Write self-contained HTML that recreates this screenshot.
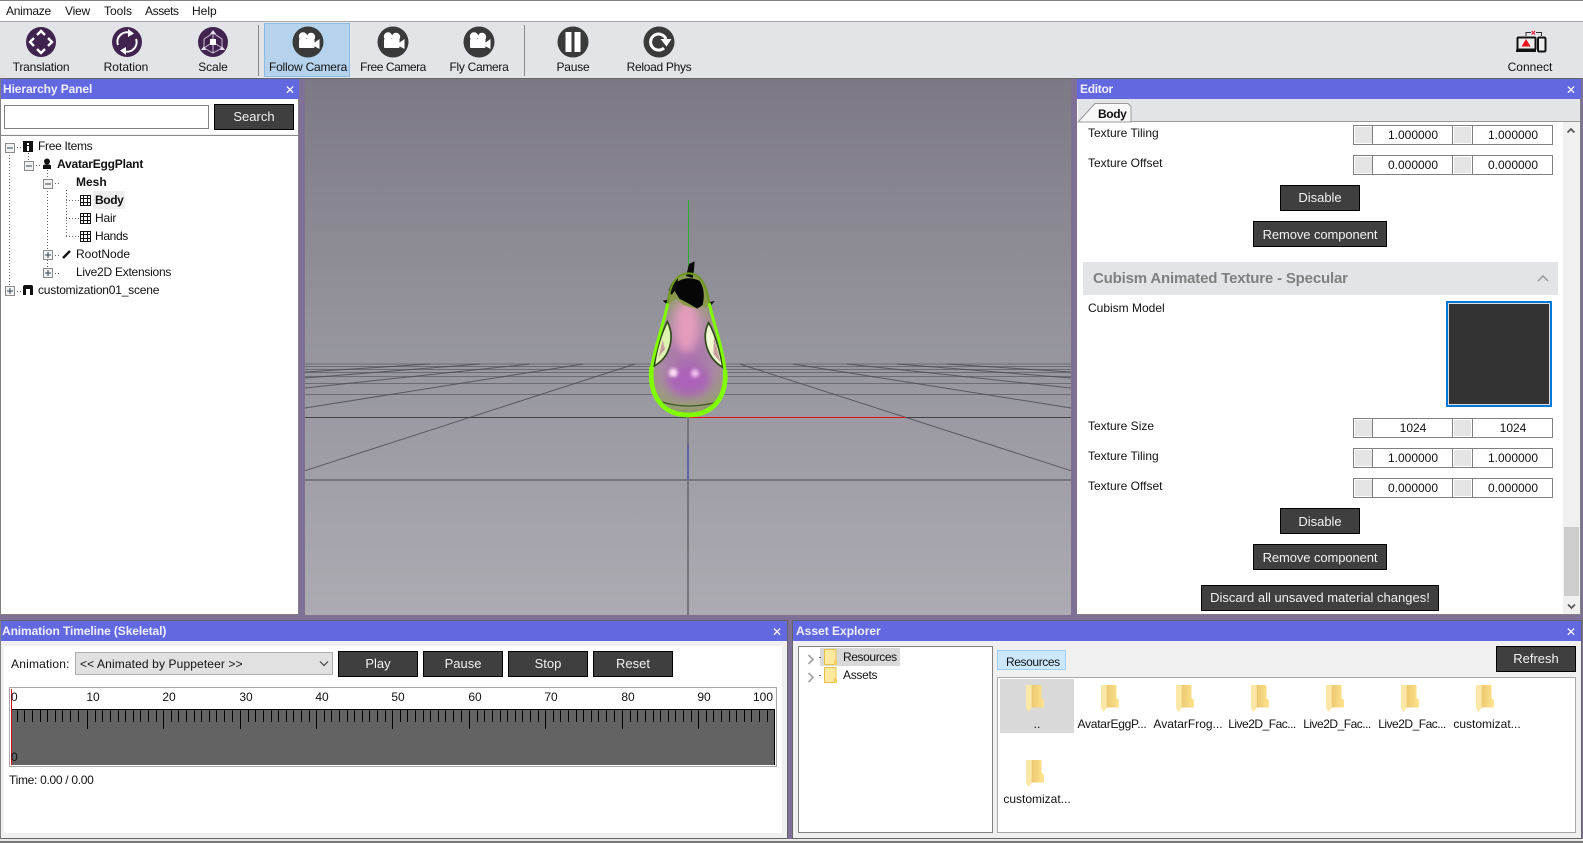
<!DOCTYPE html>
<html><head><meta charset="utf-8"><title>Animaze Editor</title>
<style>
*{box-sizing:border-box}
html,body{margin:0;padding:0}
body{width:1583px;height:843px;overflow:hidden;position:relative;background:#7e7096;font:12px/16px "Liberation Sans",sans-serif;color:#111}
.a{position:absolute}
.t{position:absolute;white-space:nowrap;height:16px;line-height:16px}
.c{position:absolute;white-space:nowrap;height:16px;line-height:16px;width:120px;text-align:center}
.b{position:absolute;background:#3f3f3f;border:1px solid #000;color:#f2f2f2;font-size:13px;text-align:center;white-space:nowrap}
.title{position:absolute;background:#6269e0;height:20px;color:#eef;font-weight:bold;line-height:20px;white-space:nowrap;padding-left:2px}
.x{position:absolute;color:#fff;top:1px;font:12px/20px "DejaVu Sans",sans-serif;font-weight:normal;letter-spacing:0}
.fr{position:absolute;left:1353px;width:200px;height:20px;background:#fff;border:1px solid #808080;text-align:center;line-height:19px}
.fr i{position:absolute;top:0;width:19px;height:18px;background:#e5e5e5;border:1px solid #fff;border-right:1px solid #fff}
.fr i.l{left:0}.fr i.r{left:99px}
.fr s{position:absolute;top:0;width:1px;height:18px;background:#808080}
.fr span{position:absolute;top:0;width:80px;height:18px}
.fr span.l{left:19px}.fr span.r{left:119px}
svg{position:absolute;overflow:visible}
</style></head><body>

<!-- menu -->
<div class="a" style="left:0;top:0;width:1583px;height:22px;background:#fff;border-top:1px solid #808080;border-bottom:1px solid #a8a8a8"></div>
<div class="t" style="left:6px;top:3px;letter-spacing:-.25px">Animaze</div>
<div class="t" style="left:65px;top:3px;letter-spacing:-.2px">View</div>
<div class="t" style="left:104px;top:3px">Tools</div>
<div class="t" style="left:145px;top:3px;letter-spacing:-.4px">Assets</div>
<div class="t" style="left:192px;top:3px">Help</div>

<!-- toolbar -->
<div class="a" style="left:0;top:22px;width:1583px;height:57px;background:#e3e4e8;border-bottom:1px solid #666"></div>
<div class="a" style="left:264px;top:23px;width:86px;height:54px;background:#b5d3ec;border:1px solid #8cbce6"></div>
<div class="a" style="left:258px;top:25px;width:1px;height:51px;background:#8a8a8a"></div>
<div class="a" style="left:524px;top:25px;width:1px;height:51px;background:#8a8a8a"></div>

<svg style="left:0;top:0" width="1583" height="80" viewBox="0 0 1583 80">
 <!-- translation -->
 <g transform="translate(41,42)"><circle r="15" fill="#40234f"/>
  <path d="M-4,-7 L0,-11 L4,-7 M-4,7 L0,11 L4,7 M-7,-4 L-11,0 L-7,4 M7,-4 L11,0 L7,4" fill="none" stroke="#fff" stroke-width="2.4"/></g>
 <!-- rotation -->
 <g transform="translate(127,42)"><circle r="15" fill="#40234f"/>
  <path d="M-9,3 A9.5,9.5 0 0 1 3,-9.2 M9,-3 A9.5,9.5 0 0 1 -3,9.2" fill="none" stroke="#fff" stroke-width="2"/>
  <path d="M1,-13 L7,-8.5 L1,-5Z M-1,13 L-7,8.500 L-1,5Z" fill="#fff"/></g>
 <!-- scale -->
 <g transform="translate(213,42)"><circle r="15" fill="#40234f"/>
  <path d="M0,-9 L-9,-3 L-9,6 L0,11 L9,6 L9,-3Z M0,-9 V-3 M-9,6 L-3,2 M9,6 L3,2 M0,3V11" fill="none" stroke="#cdbfd6" stroke-width="1"/>
  <rect x="-3" y="-3" width="6" height="6" fill="#fff"/><path d="M0,-12 L-3,-8 H3Z M-12,8 L-7,8 L-9,4Z M12,8 L7,8 L9,4Z" fill="#e8e0ee"/></g>
 <!-- cameras -->
 <g transform="translate(308,42)"><circle r="15.5" fill="#3a3a3a"/>
  <circle cx="-5" cy="-5.500" r="4.200" fill="#fff"/><circle cx="3" cy="-5" r="4.200" fill="#fff"/>
  <rect x="-9" y="-3" width="15.500" height="9" rx="1" fill="#fff"/><path d="M6,1 L11.500,-3 V7 L6,4Z" fill="#fff"/></g>
 <g transform="translate(393,42)"><circle r="15.5" fill="#3a3a3a"/>
  <circle cx="-5" cy="-5.500" r="4.200" fill="#fff"/><circle cx="3" cy="-5" r="4.200" fill="#fff"/>
  <rect x="-9" y="-3" width="15.500" height="9" rx="1" fill="#fff"/><path d="M6,1 L11.500,-3 V7 L6,4Z" fill="#fff"/></g>
 <g transform="translate(479,42)"><circle r="15.5" fill="#3a3a3a"/>
  <circle cx="-5" cy="-5.500" r="4.200" fill="#fff"/><circle cx="3" cy="-5" r="4.200" fill="#fff"/>
  <rect x="-9" y="-3" width="15.500" height="9" rx="1" fill="#fff"/><path d="M6,1 L11.500,-3 V7 L6,4Z" fill="#fff"/></g>
 <!-- pause -->
 <g transform="translate(573,42)"><circle r="15.5" fill="#3a3a3a"/><rect x="-7.5" y="-10" width="6" height="20" fill="#fff"/><rect x="1.5" y="-10" width="6" height="20" fill="#fff"/></g>
 <!-- reload -->
 <g transform="translate(659,42)"><circle r="15.5" fill="#3a3a3a"/>
  <path d="M5,6 A8,8 0 1 1 7,-3" fill="none" stroke="#fff" stroke-width="3"/><path d="M1.500,-3 H12.500 L7.500,4.500Z" fill="#fff"/></g>
 <!-- connect -->
 <g>
  <rect x="1517.5" y="37.5" width="18" height="12" rx="1" fill="#eee" stroke="#111" stroke-width="2"/>
  <path d="M1516,49.500 H1536 V52 H1516Z" fill="#111"/>
  <path d="M1526,39 L1530.700,46.500 H1521.500Z" fill="#e8141c"/>
  <rect x="1538" y="37.5" width="7.5" height="14" rx="1.2" fill="#eee" stroke="#111" stroke-width="2"/>
  <path d="M1526,36 V32.500 H1531 M1536,32.500 H1541.500 V36" fill="none" stroke="#333" stroke-width="1"/>
  <path d="M1531.700,31 L1535,34.500 M1535,31 L1531.700,34.500" stroke="#e8344c" stroke-width="1.300"/>
 </g>
</svg>
<div class="c" style="left:-19px;top:59px;letter-spacing:-.2px">Translation</div>
<div class="c" style="left:66px;top:59px">Rotation</div>
<div class="c" style="left:153px;top:59px;letter-spacing:-.1px">Scale</div>
<div class="c" style="left:248px;top:59px;letter-spacing:-.2px">Follow Camera</div>
<div class="c" style="left:333px;top:59px;letter-spacing:-.45px">Free Camera</div>
<div class="c" style="left:419px;top:59px;letter-spacing:-.3px">Fly Camera</div>
<div class="c" style="left:513px;top:59px;letter-spacing:-.2px">Pause</div>
<div class="c" style="left:599px;top:59px;letter-spacing:-.3px">Reload Phys</div>
<div class="c" style="left:1470px;top:59px">Connect</div>

<!-- hierarchy panel -->
<div class="a" style="left:0;top:79px;width:299px;height:536px;background:#fff;border-left:1px solid #808080;border-right:1px solid #808080;border-bottom:1px solid #808080"></div>
<div class="title" style="left:1px;top:79px;width:298px;letter-spacing:-.1px">Hierarchy Panel<span class="x" style="left:284px">✕</span></div>
<div class="a" style="left:4px;top:105px;width:205px;height:24px;background:#fff;border:1px solid #808080"></div>
<div class="b" style="left:214px;top:104px;width:80px;height:26px;line-height:24px">Search</div>
<div class="a" style="left:1px;top:134px;width:297px;height:2px;background:#f0f0f0;border-bottom:1px solid #8a8a8a"></div>
<div class="a" style="left:93px;top:191px;width:32px;height:18px;background:#eee"></div>

<svg style="left:0;top:130px" width="300" height="175" viewBox="0 130 300 175">
 <g fill="none" stroke="#666" stroke-dasharray="1 2">
  <path d="M9.500,152V286M28.500,153V160M47.500,170V178M47.500,188V268M66.500,190V237M14,147.500H23M33,165.500H42M52,183.500H60M66,200.500H80M66,218.500H80M66,236.500H80M52,255.500H61M52,273.500H60M14,291.500H23"/>
 </g>
 <g fill="#f2f2f2" stroke="#8a8a8a">
  <rect x="5.500" y="143.500" width="9" height="9"/><rect x="24.500" y="161.500" width="9" height="9"/><rect x="43.500" y="179.500" width="9" height="9"/><rect x="43.500" y="250.500" width="9" height="9"/><rect x="43.500" y="268.500" width="9" height="9"/><rect x="5.500" y="286.500" width="9" height="9"/>
 </g>
 <path d="M7,148H13M26,166H32M45,184H51M45,255H51M48,252V258M45,273H51M48,270V276M7,291H13M10,288V294" stroke="#345" stroke-width="1" fill="none"/>
 <rect x="23" y="141" width="10" height="11" fill="#111"/><rect x="27" y="143" width="2" height="2" fill="#fff"/><rect x="27" y="146" width="2" height="5" fill="#fff"/>
 <circle cx="47" cy="161.500" r="3" fill="#111"/><path d="M43,169V166Q43,164.500 45,164.500H49Q51,164.500 51,166V169Z" fill="#111"/>
 <g fill="none" stroke="#111"><path d="M80.500,195.500h10v10h-10zM83.500,195.500v10M87.500,195.500v10M80.500,198.500h10M80.500,202.500h10"/><path d="M80.500,213.500h10v10h-10zM83.500,213.500v10M87.500,213.500v10M80.500,216.500h10M80.500,220.500h10"/><path d="M80.500,231.500h10v10h-10zM83.500,231.500v10M87.500,231.500v10M80.500,234.500h10M80.500,238.500h10"/></g>
 <path d="M63,258L70,251" stroke="#111" stroke-width="2.400"/>
 <path d="M23,295V287Q23,285 25,285H31Q33,285 33,287V295H30V289H26V295Z" fill="#111"/>
</svg>
<div class="t" style="left:38px;top:138px;letter-spacing:-.3px">Free Items</div>
<div class="t" style="left:57px;top:156px;font-weight:bold;letter-spacing:-.2px">AvatarEggPlant</div>
<div class="t" style="left:76px;top:174px;font-weight:bold">Mesh</div>
<div class="t" style="left:95px;top:192px;font-weight:bold;letter-spacing:-.4px">Body</div>
<div class="t" style="left:95px;top:210px;letter-spacing:-.2px">Hair</div>
<div class="t" style="left:95px;top:228px;letter-spacing:-.35px">Hands</div>
<div class="t" style="left:76px;top:246px">RootNode</div>
<div class="t" style="left:76px;top:264px;letter-spacing:-.25px">Live2D Extensions</div>
<div class="t" style="left:38px;top:282px;letter-spacing:-.2px">customization01_scene</div>

<!-- viewport -->
<div class="a" style="left:305px;top:79px;width:766px;height:536px;background:linear-gradient(180deg,#7c7985 0%,#96959d 49%,#9c9ba3 65%,#acabb2 100%)"></div>
<svg style="left:305px;top:79px" width="766" height="536" viewBox="305 79 766 536">
 <g stroke="#5e5e64" fill="none">
  <path d="M305,364H1071M305,366.500H1071M305,369.500H1071M305,372.500H1071M305,376.500H1071M305,383.500H1071M305,394.500H1071" stroke-opacity=".75"/>
  <path d="M305,470.700L635,364M1071,470.700L740,364M305,408L583,364M1071,408L793,364M305,388L530,364M1071,388L847,364M305,378L480,364M1071,378L897,364M305,372L430,364M1071,372L947,364" stroke="#4d4d52" stroke-opacity=".85"/>
  <path d="M305,417.500H1071" stroke="#444"/>
  <path d="M688,417.500H906" stroke="#e01010"/>
  <path d="M305,480H1071" stroke="#76767a" stroke-width="2"/>
  <path d="M688,417V615" stroke="#76767a" stroke-width="2"/>
  <path d="M688,444V480" stroke="#5050c8"/>
  <path d="M688.500,200V275" stroke="#28b030"/>
 </g>
 <defs>
  <radialGradient id="eg" gradientUnits="userSpaceOnUse" cx="205" cy="340" r="205"><stop offset="0" stop-color="#a86cae"/><stop offset=".45" stop-color="#a98aa4"/><stop offset=".75" stop-color="#9a9a7c"/><stop offset="1" stop-color="#8a9c58"/></radialGradient>
  <filter id="bl" x="-50%" y="-50%" width="200%" height="200%"><feGaussianBlur stdDeviation="14"/></filter>
  <filter id="bs" x="-50%" y="-50%" width="200%" height="200%"><feGaussianBlur stdDeviation="5"/></filter>
  <clipPath id="ec"><path d="M205,100C170,100 150,130 143,190C135,240 110,300 95,380C85,470 130,525 205,525C280,525 322,470 315,390C305,310 280,250 268,190C258,130 240,100 205,100Z"/></clipPath>
 </defs>
 <g transform="translate(620,240) scale(.33333)">
  <path d="M205,100C170,100 150,130 143,190C135,240 110,300 95,380C85,470 130,525 205,525C280,525 322,470 315,390C305,310 280,250 268,190C258,130 240,100 205,100Z" fill="url(#eg)"/>
  <g clip-path="url(#ec)">
   <ellipse cx="200" cy="260" rx="38" ry="80" fill="#e49cbc" filter="url(#bl)"/>
   <ellipse cx="205" cy="420" rx="65" ry="48" fill="#ac62b8" filter="url(#bl)"/>
   <circle cx="160" cy="398" r="13" fill="#ffe0f4" filter="url(#bs)"/>
   <circle cx="225" cy="400" r="12" fill="#f4c0ec" filter="url(#bs)"/>
   <path d="M135,115H275V200H240L225,205L190,195L170,175L135,200Z" fill="#8a9a4a"/>
  </g>
  <path d="M168,128Q200,105 238,122Q258,150 248,195L232,206L205,190L178,176L162,150Z" fill="#060606"/>
  <path d="M146,152Q158,116 174,116L172,142L155,165Z M128,182L148,178L142,194Z M268,186L284,183L272,198Z" fill="#0d0d0d"/>
  <path d="M198,108L207,72L224,64L222,90L218,114Z" fill="#0a0a0a"/>
  <path d="M142,245C165,290 152,350 103,378C108,330 125,280 142,245Z" fill="#dff3b0" stroke="#2f4a18" stroke-width="5"/>
  <path d="M266,248C245,285 255,350 308,382C302,340 285,280 266,248Z" fill="#f0fbd4" stroke="#2f4a18" stroke-width="5"/>
  <path d="M282,290L302,368L280,342Z M128,300L116,350L135,328Z" fill="#c9a0a0"/>
  <path d="M125,486Q205,510 292,486" fill="none" stroke="#3a5a20" stroke-width="4"/>
  <path d="M143,190C150,130 170,100 205,100C240,100 258,130 268,190" fill="none" stroke="#6d9a1c" stroke-width="6"/>
  <path d="M143,190C135,240 110,300 95,380M268,190C280,250 305,310 315,390" fill="none" stroke="#7fff00" stroke-width="9"/>
  <path d="M95,380C85,470 130,525 205,525C280,525 322,470 315,390" fill="none" stroke="#7fff00" stroke-width="14"/>
 </g>
</svg>

<!-- editor -->
<div class="a" style="left:1077px;top:79px;width:504px;height:536px;background:#fff;border-right:1px solid #808080;border-bottom:1px solid #808080"></div>
<div class="title" style="left:1077px;top:79px;width:504px;padding-left:3px;letter-spacing:-.3px">Editor<span class="x" style="left:489px">✕</span></div>
<div class="a" style="left:1078px;top:99px;width:502px;height:23px;background:#e3e4e8;border-bottom:1px solid #999"></div>
<svg style="left:0;top:0" width="1583" height="200" viewBox="0 0 1583 200"><path d="M1078.500,121.500L1095,103.500H1128L1131,106.500V122H1078Z" fill="#f8f8f8" stroke="#999"/></svg>
<div class="t" style="left:1098px;top:106px;font-weight:bold;letter-spacing:-.4px">Body</div>

<div class="a" style="left:1563px;top:122px;width:17px;height:492px;background:#f0f0f0"></div>
<div class="a" style="left:1564px;top:527px;width:15px;height:69px;background:#cdcdcd"></div>

<div class="t" style="left:1088px;top:125px">Texture Tiling</div>
<div class="fr" style="top:125px"><i class="l"></i><s style="left:18px"></s><span class="l">1.000000</span><s style="left:98px"></s><i class="r"></i><s style="left:118px"></s><span class="r">1.000000</span></div>
<div class="t" style="left:1088px;top:155px">Texture Offset</div>
<div class="fr" style="top:155px"><i class="l"></i><s style="left:18px"></s><span class="l">0.000000</span><s style="left:98px"></s><i class="r"></i><s style="left:118px"></s><span class="r">0.000000</span></div>
<div class="b" style="left:1280px;top:185px;width:80px;height:26px;line-height:24px">Disable</div>
<div class="b" style="left:1253px;top:221px;width:134px;height:26px;line-height:25px;letter-spacing:-.1px">Remove component</div>

<div class="a" style="left:1083px;top:262px;width:475px;height:33px;background:#e3e4e8"></div>
<div class="t" style="left:1093px;top:271px;font-weight:bold;font-size:15px;color:#808080;letter-spacing:-.18px">Cubism Animated Texture - Specular</div>
<div class="t" style="left:1088px;top:300px">Cubism Model</div>
<div class="a" style="left:1446px;top:301px;width:106px;height:106px;background:#333;border:2px solid #0078d7;box-shadow:inset 0 0 0 1px #ddd"></div>

<svg style="left:0;top:0" width="1583" height="620" viewBox="0 0 1583 620"><path d="M1567.500,132.500L1571,129L1574.500,132.500M1568,604.500L1571.500,608L1575,604.500" fill="none" stroke="#555" stroke-width="1.700"/><path d="M1538,281L1543,276L1548,281" fill="none" stroke="#999" stroke-width="1.500"/></svg>

<div class="t" style="left:1088px;top:418px">Texture Size</div>
<div class="fr" style="top:418px"><i class="l"></i><s style="left:18px"></s><span class="l">1024</span><s style="left:98px"></s><i class="r"></i><s style="left:118px"></s><span class="r">1024</span></div>
<div class="t" style="left:1088px;top:448px">Texture Tiling</div>
<div class="fr" style="top:448px"><i class="l"></i><s style="left:18px"></s><span class="l">1.000000</span><s style="left:98px"></s><i class="r"></i><s style="left:118px"></s><span class="r">1.000000</span></div>
<div class="t" style="left:1088px;top:478px">Texture Offset</div>
<div class="fr" style="top:478px"><i class="l"></i><s style="left:18px"></s><span class="l">0.000000</span><s style="left:98px"></s><i class="r"></i><s style="left:118px"></s><span class="r">0.000000</span></div>
<div class="b" style="left:1280px;top:508px;width:80px;height:26px;line-height:25px">Disable</div>
<div class="b" style="left:1253px;top:544px;width:134px;height:26px;line-height:25px;letter-spacing:-.1px">Remove component</div>
<div class="b" style="left:1201px;top:585px;width:238px;height:26px;line-height:24px">Discard all unsaved material changes!</div>

<!-- timeline panel -->
<div class="a" style="left:0;top:620px;width:788px;height:219px;background:#f0f0f0;border:1px solid #666;border-left:1px solid #808080"></div>
<div class="a" style="left:4px;top:646px;width:778px;height:187px;background:#fff"></div>
<div class="title" style="left:1px;top:621px;width:786px;padding-left:1px;letter-spacing:-.1px">Animation Timeline (Skeletal)<span class="x" style="left:771px">✕</span></div>
<div class="t" style="left:11px;top:656px;letter-spacing:.2px">Animation:</div>
<div class="a" style="left:75px;top:652px;width:258px;height:23px;background:#e1e1e1;border:1px solid #adadad"></div>
<div class="t" style="left:80px;top:656px;letter-spacing:.12px">&lt;&lt; Animated by Puppeteer &gt;&gt;</div>
<svg style="left:0;top:640px" width="800" height="140" viewBox="0 640 800 140">
 <path d="M320,661.500L324,665.500L328,661.500" fill="none" stroke="#444" stroke-width="1.200"/>
</svg>
<div class="b" style="left:338px;top:651px;width:80px;height:26px;line-height:24px;font-size:13px">Play</div>
<div class="b" style="left:423px;top:651px;width:80px;height:26px;line-height:24px">Pause</div>
<div class="b" style="left:508px;top:651px;width:80px;height:26px;line-height:24px">Stop</div>
<div class="b" style="left:593px;top:651px;width:80px;height:26px;line-height:24px">Reset</div>

<div class="a" style="left:9px;top:687px;width:768px;height:80px;background:#fff;border:1px solid #a8a8a8"></div>
<div class="a" style="left:11px;top:709px;width:764px;height:56px;background:#636363;border-top:1px solid #000;border-right:1px solid #000"></div>
<svg style="left:0;top:680px" width="800" height="90" viewBox="0 680 800 90">
 <defs><path id="tk" d="M8.500,710v12M15.500,710v12M23.500,710v12M31.500,710v12M38.500,710v12M46.500,710v12M53.500,710v12M61.500,710v12M69.500,710v12" stroke="#000" fill="none"/></defs>
 <use href="#tk" x="9"/><use href="#tk" x="87"/><use href="#tk" x="163"/><use href="#tk" x="240"/><use href="#tk" x="316"/><use href="#tk" x="392"/><use href="#tk" x="469"/><use href="#tk" x="545"/><use href="#tk" x="622"/><use href="#tk" x="698"/>
 <path d="M87.500,710v19M163.500,710v19M240.500,710v19M316.500,710v19M392.500,710v19M469.500,710v19M545.500,710v19M622.500,710v19M698.500,710v19" stroke="#000" fill="none"/>
 <path d="M11.500,689V765" stroke="#d01010" fill="none"/>
</svg>
<div class="t" style="left:11px;top:689px">0</div>
<div class="c" style="left:33px;top:689px">10</div>
<div class="c" style="left:109px;top:689px">20</div>
<div class="c" style="left:186px;top:689px">30</div>
<div class="c" style="left:262px;top:689px">40</div>
<div class="c" style="left:338px;top:689px">50</div>
<div class="c" style="left:415px;top:689px">60</div>
<div class="c" style="left:491px;top:689px">70</div>
<div class="c" style="left:568px;top:689px">80</div>
<div class="c" style="left:644px;top:689px">90</div>
<div class="c" style="left:703px;top:689px">100</div>
<div class="t" style="left:11px;top:749px;color:#111">0</div>
<div class="t" style="left:9px;top:772px;letter-spacing:-.3px">Time: 0.00 / 0.00</div>

<!-- asset panel -->
<div class="a" style="left:792px;top:620px;width:790px;height:219px;background:#f0f0f0;border:1px solid #666"></div>
<div class="title" style="left:793px;top:621px;width:788px;padding-left:3px">Asset Explorer<span class="x" style="left:773px">✕</span></div>
<div class="a" style="left:798px;top:646px;width:195px;height:187px;background:#fff;border:1px solid #808080"></div>
<div class="a" style="left:820px;top:648px;width:80px;height:18px;background:#d9d9d9"></div>
<svg style="left:0;top:640px" width="1000" height="50" viewBox="0 640 1000 50">
 <path d="M808.500,655L813,659.500L808.500,664M808.500,673L813,677.500L808.500,682" fill="none" stroke="#a6a6a6" stroke-width="1.800"/>
 <path d="M819,657.500h2M819,675.500h2" stroke="#666"/>
 <g><path d="M824.500,649.500H836V664.500H824.500Z" fill="#ffe9a0" stroke="#eac24a"/><path d="M834,660.500H837V665H834Z" fill="#f3cf5c"/></g>
 <g><path d="M824.500,667.500H836V682.500H824.500Z" fill="#ffe9a0" stroke="#eac24a"/><path d="M834,678.500H837V683H834Z" fill="#f3cf5c"/></g>
</svg>
<div class="t" style="left:843px;top:649px;letter-spacing:-.4px">Resources</div>
<div class="t" style="left:843px;top:667px;letter-spacing:-.3px">Assets</div>

<div class="a" style="left:997px;top:650px;width:69px;height:20px;background:#cce8ff;border:1px solid #99d1ff"></div>
<div class="t" style="left:1006px;top:654px;letter-spacing:-.4px">Resources</div>
<div class="b" style="left:1496px;top:646px;width:80px;height:26px;line-height:24px">Refresh</div>
<div class="a" style="left:997px;top:677px;width:579px;height:156px;background:#fff;border:1px solid #a8a8a8"></div>
<div class="a" style="left:1000px;top:679px;width:74px;height:54px;background:#d9d9d9"></div>

<svg style="left:0;top:0;width:1583px;height:843px" viewBox="0 0 1583 843">
 <defs>
  <linearGradient id="fg" x1="0" y1="0" x2="1" y2="0"><stop offset="0" stop-color="#ecc870"/><stop offset="1" stop-color="#fde48e"/></linearGradient>
  <g id="fd"><path d="M5.500,0H15.500V13L18,15V22.500H5.500Z" fill="url(#fg)"/><path d="M0,0H5.700V23L2.500,27L0,23Z" fill="#fbe7a8"/></g>
 </defs>
 <use href="#fd" x="1026" y="685"/><use href="#fd" x="1101" y="685"/><use href="#fd" x="1176" y="685"/><use href="#fd" x="1251" y="685"/><use href="#fd" x="1326" y="685"/><use href="#fd" x="1401" y="685"/><use href="#fd" x="1476" y="685"/><use href="#fd" x="1026" y="760"/>
</svg>
<div class="c" style="left:977px;top:716px">..</div>
<div class="c" style="left:1052px;top:716px;letter-spacing:-.25px">AvatarEggP...</div>
<div class="c" style="left:1128px;top:716px">AvatarFrog...</div>
<div class="c" style="left:1202px;top:716px;letter-spacing:-.5px">Live2D_Fac...</div>
<div class="c" style="left:1277px;top:716px;letter-spacing:-.5px">Live2D_Fac...</div>
<div class="c" style="left:1352px;top:716px;letter-spacing:-.5px">Live2D_Fac...</div>
<div class="c" style="left:1427px;top:716px">customizat...</div>
<div class="c" style="left:977px;top:791px">customizat...</div>

<!-- bottom -->
<div class="a" style="left:0;top:839px;width:1583px;height:2px;background:#e9e9e9"></div>
<div class="a" style="left:0;top:841px;width:1583px;height:2px;background:#777"></div>
</body></html>
